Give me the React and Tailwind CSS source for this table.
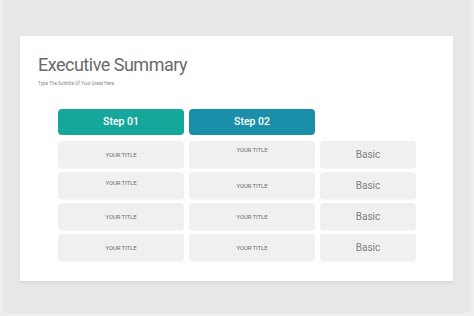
const steps = [
  { label: 'Step 01', color: 'bg-[#15a79b]' },
  { label: 'Step 02', color: 'bg-[#1b8fa9]' },
];

// per-row label offsets: a few titles sit a little high in their cells
const rows = [
  { a: 'items-center', b: 'items-start pt-[6px]' },
  { a: 'items-start pt-[8px]', b: 'items-center' },
  { a: 'items-center', b: 'items-center' },
  { a: 'items-center', b: 'items-center' },
];

function Cell({ align, children, big }) {
  return (
    <div
      className={`flex justify-center h-[27px] rounded-[4px] bg-[#f0f0f0] shadow-[0_1px_1px_rgba(0,0,0,0.04)] ${align}`}
    >
      {big ? (
        <span className="text-[10px] leading-none text-[#808080]">{children}</span>
      ) : (
        <span className="text-[6px] leading-none tracking-[-0.1px] text-[#6f6f6f]">{children}</span>
      )}
    </div>
  );
}

export default function App() {
  return (
    <div
      className="w-[474px] h-[316px] bg-[#e9e8e9] border-x-[3px] border-b-[3px] border-[#efeeef] pl-[17px] pt-[36px]"
      style={{ fontFamily: 'Roboto, "Liberation Sans", sans-serif' }}
    >
      <div className="w-[433px] h-[245px] bg-white shadow-[0_2px_3px_rgba(0,0,0,0.08)] pl-[18px] pt-[19px]">
        <h1 className="text-[18px] leading-[20px] font-normal tracking-[-0.5px] text-[#6a6a6a]">Executive Summary</h1>
        <p className="mt-[5px] text-[4.7px] leading-[8px] text-[#8a8a8a]">Type The Subtitle Of Your Great Here</p>

        <div className="mt-[21px] ml-[20px] grid grid-cols-[126px_126px_96px] gap-x-[5px]">
          {steps.map((s) => (
            <div
              key={s.label}
              className={`h-[26px] rounded-[4px] flex items-center justify-center text-white text-[10.5px] font-medium ${s.color}`}
            >
              {s.label}
            </div>
          ))}
          <div />
        </div>

        <div className="mt-[6px] ml-[20px] grid grid-cols-[126px_126px_96px] gap-x-[5px] gap-y-[4px]">
          {rows.map((r, i) => (
            <div key={i} className="contents">
              <Cell align={r.a}>YOUR TITLE</Cell>
              <Cell align={r.b}>YOUR TITLE</Cell>
              <Cell align="items-center" big>
                Basic
              </Cell>
            </div>
          ))}
        </div>
      </div>
    </div>
  );
}
